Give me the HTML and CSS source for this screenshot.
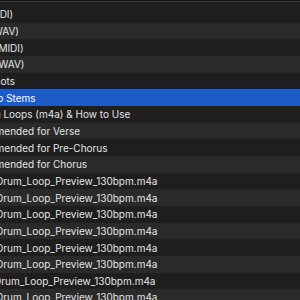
FILE: index.html
```html
<!DOCTYPE html>
<html>
<head>
<meta charset="utf-8">
<link rel="stylesheet" href="styles.css">
</head>
<body>
<div class="list">
  <div class="topline"></div>
  <div class="row first"><span class="name n-midi1">Chord Progressions (MIDI)</span></div>
  <div class="row"><span class="name n-wav1">Chord Progressions (WAV)</span></div>
  <div class="row"><span class="name n-midi2">Melodies (MIDI)</span></div>
  <div class="row"><span class="name n-wav2">Melodies (WAV)</span></div>
  <div class="row"><span class="name n-shots">One Shots</span></div>
  <div class="row selected"><span class="name n-stems">Audio Stems</span></div>
  <div class="row"><span class="name n-loops">Drum Loops (m4a) &amp; How to Use</span></div>
  <div class="row"><span class="name n-rec">Recommended for Verse</span></div>
  <div class="row"><span class="name n-rec">Recommended for Pre-Chorus</span></div>
  <div class="row"><span class="name n-rec">Recommended for Chorus</span></div>
  <div class="row"><span class="name n-drum">Drum_Loop_Preview_130bpm.m4a</span></div>
  <div class="row"><span class="name n-drum">Drum_Loop_Preview_130bpm.m4a</span></div>
  <div class="row"><span class="name n-drum">Drum_Loop_Preview_130bpm.m4a</span></div>
  <div class="row"><span class="name n-drum">Drum_Loop_Preview_130bpm.m4a</span></div>
  <div class="row"><span class="name n-drum">Drum_Loop_Preview_130bpm.m4a</span></div>
  <div class="row"><span class="name n-drum">Drum_Loop_Preview_130bpm.m4a</span></div>
  <div class="row"><span class="name n-drum2">Drum_Loop_Preview_130bpm.m4a</span></div>
  <div class="row"><span class="name n-drum">Drum_Loop_Preview_130bpm.m4a</span></div>
</div>
</body>
</html>
```
FILE: styles.css
```css
html, body {
  margin: 0;
  padding: 0;
  background: #1e1e1e;
  overflow: hidden;
}
.list {
  width: 300px;
  height: 300px;
  overflow: hidden;
  font-family: Inter, "Noto Sans", "Liberation Sans", sans-serif;
  font-size: 10px;
  color: #e4e4e4;
}
.topline {
  height: 1px;
  background: #161616;
  border-bottom: 1px solid #3a3a3a;
}
.row {
  height: 16.667px;
  display: flex;
  align-items: center;
  white-space: nowrap;
  overflow: hidden;
  background: #1e1e1e;
}
.row:nth-child(odd) {
  background: #2a2a2a;
}
.row.first {
  height: 20.667px;
  padding-top: 4px;
  box-sizing: border-box;
}
.row.selected {
  background: #1d5bc9;
  color: #ffffff;
}
.name {
  flex: none;
}
.n-midi1 { margin-left: -112px; }
.n-wav1 { margin-left: -107px; }
.n-midi2 { margin-left: -51px; }
.n-wav2 { margin-left: -51px; }
.n-shots { margin-left: -34px; }
.n-stems { margin-left: -24px; }
.n-loops { margin-left: -25px; }
.n-rec { margin-left: -37px; }
.n-drum { margin-left: -4px; }
.n-drum2 { margin-left: -6px; }
```
